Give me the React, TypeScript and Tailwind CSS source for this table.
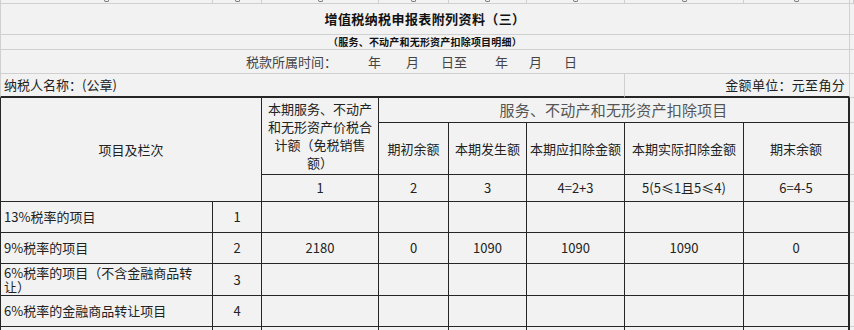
import React from 'react';

const dark = 'border-[#262626]';
const light = 'border-[#d0d0d0]';

const Cell: React.FC<{ className?: string; children?: React.ReactNode }> = ({ className = '', children }) => (
  <div className={`flex items-center overflow-hidden ${className}`}>{children}</div>
);

const rows = [
  { name: '13%税率的项目', no: '1', vals: ['', '', '', '', '', ''] },
  { name: '9%税率的项目', no: '2', vals: ['2180', '0', '1090', '1090', '1090', '0'] },
  { name: '6%税率的项目（不含金融商品转\n让）', no: '3', vals: ['', '', '', '', '', ''] },
  { name: '6%税率的金融商品转让项目', no: '4', vals: ['', '', '', '', '', ''] },
];

// bottoms of the glyphs in the spreadsheet row scrolled off above
const stripMarks = [true, true, true, true, true, true, true, true, false];

const App: React.FC = () => {
  return (
    <div
      className="w-[854px] h-[330px] overflow-hidden bg-[#f2f2f2] text-[#222] text-[13px]"
      style={{ fontFamily: '"Noto Sans CJK SC", "Noto Sans", sans-serif' }}
    >
      <div className="grid grid-cols-[213px_49px_117px_70px_78px_98px_119px_106px_4px] grid-rows-[4px_31px_15px_24px_24px_25px_52px_27px_31px_31px_32px_31px_3px]">
        {/* cut-off spreadsheet row */}
        {stripMarks.map((m, i) => (
          <div key={i} className={`flex justify-center items-start overflow-hidden border-r border-b ${light} ${i === 0 ? 'border-l' : ''}`}>
            {m && <span className="block w-[5px] h-[2px] rounded-b-sm border-b border-x border-[#777]" />}
          </div>
        ))}

        {/* title */}
        <Cell className={`col-span-8 justify-center border-l border-r border-b ${light}`}>
          <span className="font-bold text-[13px] tracking-[0.4px] text-[#111]">增值税纳税申报表附列资料（三）</span>
        </Cell>
        <Cell className={`border-b ${light}`} />

        <Cell className={`col-span-8 justify-center border-l border-r border-b ${light}`}>
          <span className="font-bold text-[10px] leading-none tracking-[0.2px] text-[#111]">（服务、不动产和无形资产扣除项目明细）</span>
        </Cell>
        <Cell className={`border-b ${light}`} />

        <Cell className={`col-span-8 pl-[245px] border-l border-r border-b ${light} text-[#444]`}>
          <span>税款所属时间：</span>
          <span className="ml-[31px]">年</span>
          <span className="ml-[25px]">月</span>
          <span className="ml-[22px]">日至</span>
          <span className="ml-[28px]">年</span>
          <span className="ml-[21px]">月</span>
          <span className="ml-[22px]">日</span>
        </Cell>
        <Cell className={`border-b ${light}`} />

        <Cell className={`col-span-6 pl-[3px] border-l border-r ${light} border-b-2 border-b-[#262626]`}>
          <span>纳税人名称：(公章)</span>
        </Cell>
        <Cell className={`col-span-2 justify-end pr-[4px] border-r ${light} border-b-2 border-b-[#262626]`}>
          <span className="tracking-[0.3px]">金额单位：元至角分</span>
        </Cell>
        <Cell className={`border-b ${light}`} />

        {/* table header */}
        <Cell className={`col-span-2 row-span-3 justify-center border-l border-r border-b ${dark}`}>
          <span>项目及栏次</span>
        </Cell>
        <Cell className={`row-span-2 justify-center text-center leading-[18px] border-r border-b ${dark}`}>
          <span>
            本期服务、不动产
            <br />
            和无形资产价税合
            <br />
            计额（免税销售
            <br />
            额）
          </span>
        </Cell>
        <Cell className={`col-span-5 justify-center border-b border-r-2 ${dark}`}>
          <span className="text-[15px] text-[#555] tracking-[0.2px]">服务、不动产和无形资产扣除项目</span>
        </Cell>
        <Cell className={`border-b ${light}`} />

        {['期初余额', '本期发生额', '本期应扣除金额', '本期实际扣除金额', '期末余额'].map((t, i) => (
          <Cell key={t} className={`justify-center border-b ${dark} ${i === 4 ? 'border-r-2' : 'border-r'}`}>
            <span className="whitespace-nowrap">{t}</span>
          </Cell>
        ))}
        <Cell className={`border-b ${light}`} />

        {['1', '2', '3', '4=2+3', '5(5≤1且5≤4)', '6=4-5'].map((t, i) => (
          <Cell key={t} className={`justify-center border-b ${dark} ${i === 5 ? 'border-r-2' : 'border-r'}`}>
            <span className="whitespace-nowrap">{t}</span>
          </Cell>
        ))}
        <Cell className={`border-b ${light}`} />

        {/* data rows */}
        {rows.map((r) => (
          <React.Fragment key={r.no}>
            <Cell className={`pl-[3px] leading-[14px] whitespace-pre-line border-l border-r border-b ${dark}`}>
              <span>{r.name}</span>
            </Cell>
            <Cell className={`justify-center border-r border-b ${dark}`}>
              <span>{r.no}</span>
            </Cell>
            {r.vals.map((v, i) => (
              <Cell key={i} className={`justify-center border-b ${dark} ${i === 5 ? 'border-r-2' : 'border-r'}`}>
                <span>{v}</span>
              </Cell>
            ))}
            <Cell className={`border-b ${light}`} />
          </React.Fragment>
        ))}

        {/* next row, cut off */}
        {Array.from({ length: 8 }).map((_, i) => (
          <Cell key={i} className={`${dark} ${i === 0 ? 'border-l' : ''} ${i === 7 ? 'border-r-2' : 'border-r'}`} />
        ))}
        <Cell />
      </div>
    </div>
  );
};

export default App;
